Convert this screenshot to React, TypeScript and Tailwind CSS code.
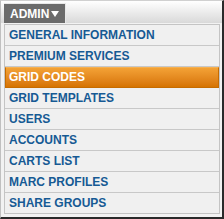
import React from "react";

const items = [
  "GENERAL INFORMATION",
  "PREMIUM SERVICES",
  "GRID CODES",
  "GRID TEMPLATES",
  "USERS",
  "ACCOUNTS",
  "CARTS LIST",
  "MARC PROFILES",
  "SHARE GROUPS",
];

const active = "GRID CODES";

const App = () => {
  return (
    <div
      className="h-[219px] w-[224px] border-t border-l border-r-2 border-b-2 border-t-[#d0d0d0] border-l-[#c0c0c0] border-r-[#2a2a2a] border-b-[#2a2a2a] bg-[#f2f2f2]"
      style={{ fontFamily: '"Liberation Sans", Arial, sans-serif' }}
    >
      <div className="flex h-[22px] items-end bg-gradient-to-b from-white to-[#d9d9d9] pl-[3px]">
        <div className="flex h-[20px] w-[62px] items-center border-r border-t border-[#e8e8e8] bg-[#6b6b6b] pl-[6px] text-[12px] font-bold text-white">
          ADMIN
          <svg width="8" height="6" viewBox="0 0 8 6" className="ml-[2px] mt-[1px]">
            <path d="M0 0H8L4 6Z" fill="white" />
          </svg>
        </div>
      </div>
      <div className="ml-[3px] mr-[2px] mt-[1px] border border-[#c4c4c4] bg-[#f0f0f0]">
        {items.map((name) => (
          <div
            key={name}
            className={
              name === active
                ? "h-[21px] border border-[#c66c00] border-t-[#f5b050] bg-gradient-to-b from-[#f3a235] to-[#d67300] pl-[3px] text-[12px] font-bold leading-[19px] text-white"
                : "h-[21px] border-b border-[#c8c8c8] pl-[4px] text-[12px] font-bold leading-[20px] text-[#165a94] last:h-[20px] last:border-b-0"
            }
          >
            {name}
          </div>
        ))}
      </div>
    </div>
  );
};

export default App;
